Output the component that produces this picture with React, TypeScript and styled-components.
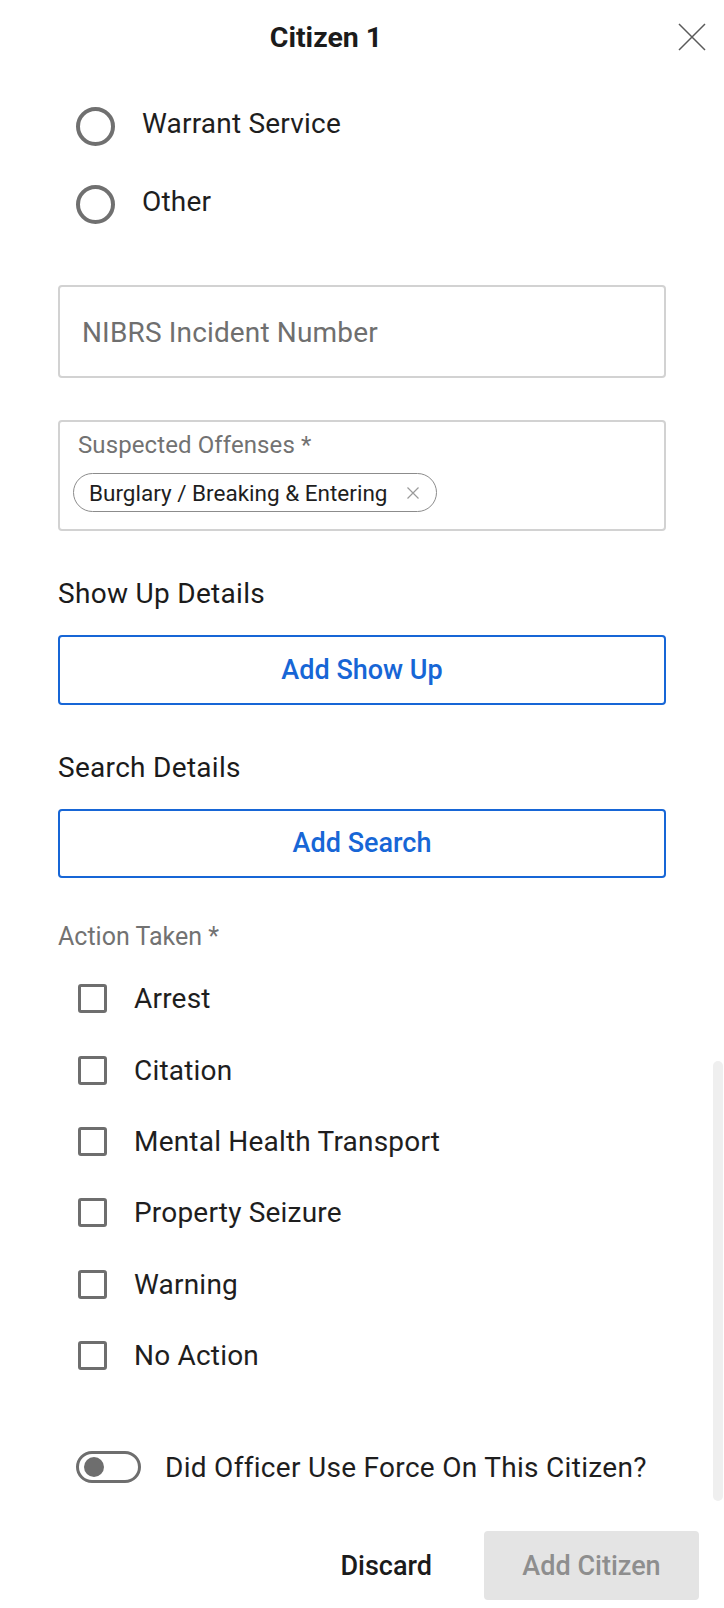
import React from "react";
import styled, { createGlobalStyle } from "styled-components";

const GlobalStyle = createGlobalStyle`
  html, body {
    margin: 0;
    padding: 0;
    background: #ffffff;
  }
  body {
    font-family: Roboto, "Noto Sans", "Liberation Sans", Arial, sans-serif;
    color: #1e1e1e;
    -webkit-font-smoothing: antialiased;
  }
  * { box-sizing: border-box; }
`;

const Page = styled.div`
  position: relative;
  width: 724px;
  height: 1608px;
  overflow: hidden;
  background: #ffffff;
`;

const Header = styled.header`
  display: flex;
  align-items: center;
  height: 76px;
`;

const Title = styled.h1`
  flex: 1;
  margin: 0;
  text-align: center;
  font-size: 28.5px;
  font-weight: 700;
  line-height: 76px;
  color: #1b1b1b;
`;

const CloseButton = styled.button`
  width: 72px;
  height: 76px;
  display: flex;
  align-items: center;
  justify-content: flex-end;
  padding: 0 18px 2px 0;
  border: none;
  background: transparent;
  cursor: pointer;
`;

const Content = styled.main`
  padding: 11px 58px 0;
`;

const RadioList = styled.div`
  display: flex;
  flex-direction: column;
`;

const RadioRow = styled.label`
  display: flex;
  align-items: center;
  height: 78px;
  padding-left: 18px;
  gap: 27px;
`;

const RadioCircle = styled.span`
  width: 39px;
  height: 39px;
  border: 4px solid #707070;
  border-radius: 50%;
  flex-shrink: 0;
`;

const BodyText = styled.span`
  font-size: 28px;
  letter-spacing: 0.2px;
  color: #1e1e1e;
`;

const RadioLabel = styled(BodyText)`
  padding-bottom: 5px;
`;

const TextField = styled.div`
  margin-top: 42px;
  height: 93px;
  border: 2px solid #d2d2d2;
  border-radius: 4px;
  display: flex;
  align-items: center;
  padding-left: 22px;
  padding-top: 2px;
  font-size: 28px;
  letter-spacing: 0.15px;
  color: #6f6f6f;
`;

const OffenseField = styled.div`
  margin-top: 42px;
  height: 111px;
  border: 2px solid #d2d2d2;
  border-radius: 4px;
  padding: 9px 18px 0 13px;
`;

const FloatingLabel = styled.div`
  font-size: 24px;
  letter-spacing: 0.1px;
  color: #727272;
  padding-left: 5px;
`;

const Chip = styled.span`
  margin-top: 14px;
  display: inline-flex;
  align-items: center;
  height: 39px;
  border: 1.5px solid #8c8c8c;
  border-radius: 20px;
  padding: 0 17px 0 15px;
  gap: 20px;
  font-size: 22.5px;
  color: #1e1e1e;
`;

const Section = styled.section`
  margin-top: 46px;
`;

const SectionTitle = styled.h2`
  margin: 0 0 25px;
  font-size: 28px;
  font-weight: 400;
  color: #1b1b1b;
  letter-spacing: 0.3px;
`;

const OutlineButton = styled.button`
  width: 100%;
  height: 69.5px;
  border: 2px solid #1766d6;
  border-radius: 4px;
  background: #ffffff;
  color: #1766d6;
  font-family: inherit;
  font-size: 27px;
  font-weight: 500;
  cursor: pointer;
`;

const GroupLabel = styled.div`
  margin-top: 44px;
  font-size: 25px;
  color: #727272;
`;

const CheckList = styled.div`
  margin-top: 12px;
  display: flex;
  flex-direction: column;
`;

const CheckRow = styled.label`
  display: flex;
  align-items: center;
  height: 71.4px;
  padding-left: 20px;
  gap: 27px;
`;

const CheckBox = styled.span`
  width: 29px;
  height: 29px;
  border: 3px solid #6e6e6e;
  border-radius: 3px;
  flex-shrink: 0;
`;

const ToggleRow = styled.label`
  margin-top: 60px;
  display: flex;
  align-items: center;
  height: 32px;
  padding-left: 18px;
  gap: 24px;
`;

const ToggleTrack = styled.span`
  width: 65px;
  height: 32px;
  border: 3px solid #6e6e6e;
  border-radius: 16px;
  display: flex;
  align-items: center;
  padding-left: 5px;
  flex-shrink: 0;
`;

const ToggleKnob = styled.span`
  width: 20px;
  height: 20px;
  border-radius: 50%;
  background: #6e6e6e;
`;

const ToggleLabel = styled(BodyText)`
  letter-spacing: 0.3px;
`;

const Footer = styled.footer`
  margin-top: 48px;
  display: flex;
  justify-content: flex-end;
  align-items: center;
  padding-right: 25px;
`;

const FooterButton = styled.button<{ $primary?: boolean }>`
  height: 69px;
  padding: 0 ${(p) => (p.$primary ? "37px" : "26px")};
  margin-right: ${(p) => (p.$primary ? "0" : "26px")};
  width: ${(p) => (p.$primary ? "215px" : "auto")};
  border: none;
  border-radius: 4px;
  background: ${(p) => (p.$primary ? "#e4e4e4" : "transparent")};
  color: ${(p) => (p.$primary ? "#8e8e8e" : "#1b1b1b")};
  font-family: inherit;
  font-size: 27px;
  font-weight: 500;
  cursor: pointer;
`;

const ScrollThumb = styled.div`
  position: absolute;
  right: 1px;
  top: 1061px;
  width: 10px;
  height: 440px;
  border-radius: 5px;
  background: #efefef;
`;

const CloseIcon = () => (
  <svg width="28" height="28" viewBox="0 0 28 28" fill="none">
    <path d="M1 1 L27 27 M27 1 L1 27" stroke="#5a5a5a" strokeWidth="1.5" />
  </svg>
);

const ChipClose = () => (
  <svg width="12" height="12" viewBox="0 0 12 12" fill="none">
    <path d="M0.5 0.5 L11.5 11.5 M11.5 0.5 L0.5 11.5" stroke="#9a9a9a" strokeWidth="1.2" />
  </svg>
);

const radios = ["Warrant Service", "Other"];
const actions = [
  "Arrest",
  "Citation",
  "Mental Health Transport",
  "Property Seizure",
  "Warning",
  "No Action",
];

export default function App() {
  return (
    <>
      <GlobalStyle />
      <Page>
        <Header>
          <Title>Citizen 1</Title>
          <CloseButton aria-label="Close">
            <CloseIcon />
          </CloseButton>
        </Header>
        <Content>
          <RadioList>
            {radios.map((r) => (
              <RadioRow key={r}>
                <RadioCircle />
                <RadioLabel>{r}</RadioLabel>
              </RadioRow>
            ))}
          </RadioList>

          <TextField>NIBRS Incident Number</TextField>

          <OffenseField>
            <FloatingLabel>Suspected Offenses *</FloatingLabel>
            <Chip>
              Burglary / Breaking &amp; Entering
              <ChipClose />
            </Chip>
          </OffenseField>

          <Section>
            <SectionTitle>Show Up Details</SectionTitle>
            <OutlineButton>Add Show Up</OutlineButton>
          </Section>

          <Section>
            <SectionTitle>Search Details</SectionTitle>
            <OutlineButton>Add Search</OutlineButton>
          </Section>

          <GroupLabel>Action Taken *</GroupLabel>
          <CheckList>
            {actions.map((a) => (
              <CheckRow key={a}>
                <CheckBox />
                <BodyText>{a}</BodyText>
              </CheckRow>
            ))}
          </CheckList>

          <ToggleRow>
            <ToggleTrack>
              <ToggleKnob />
            </ToggleTrack>
            <ToggleLabel>Did Officer Use Force On This Citizen?</ToggleLabel>
          </ToggleRow>
        </Content>
        <Footer>
          <FooterButton>Discard</FooterButton>
          <FooterButton $primary>Add Citizen</FooterButton>
        </Footer>
        <ScrollThumb />
      </Page>
    </>
  );
}
